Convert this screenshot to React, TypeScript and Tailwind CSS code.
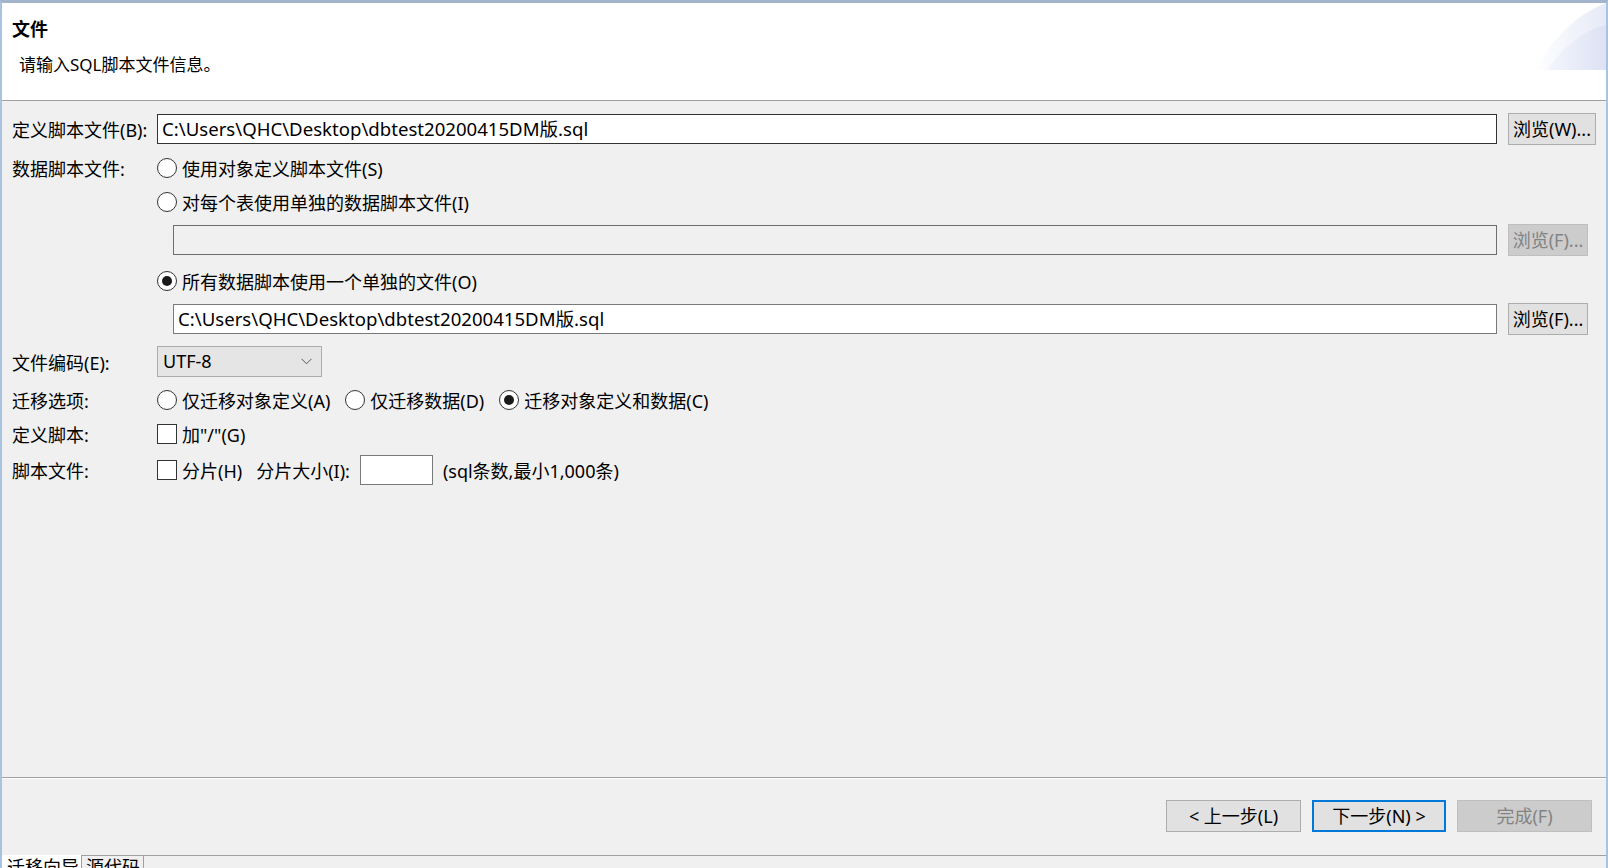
import React from "react"

const F = "font-['Noto_Sans','Noto_Sans_CJK_SC',sans-serif]"

function Radio({ checked }: { checked?: boolean }) {
  return (
    <span className="w-[20px] h-[20px] rounded-full border border-[#333333] bg-white flex items-center justify-center shrink-0">
      {checked && <span className="w-[10px] h-[10px] rounded-full bg-[#1a1a1a]" />}
    </span>
  )
}

function Check() {
  return <span className="w-[20px] h-[20px] border border-[#333333] bg-white shrink-0" />
}

function Btn({
  children,
  w,
  disabled,
  primary,
}: {
  children: React.ReactNode
  w: string
  disabled?: boolean
  primary?: boolean
}) {
  const base = "h-[32px] flex items-center justify-center text-[18px] leading-[24px] shrink-0"
  if (disabled)
    return <div className={`${base} ${w} bg-[#cccccc] border border-[#bfbfbf] text-[#838383]`}>{children}</div>
  if (primary)
    return <div className={`${base} ${w} bg-[#e1e1e1] border-2 border-[#0078d7] text-black`}>{children}</div>
  return <div className={`${base} ${w} bg-[#e1e1e1] border border-[#adadad] text-black`}>{children}</div>
}

function Label({ children }: { children: React.ReactNode }) {
  return <div className="w-[145px] shrink-0 text-[18px] leading-[24px] pt-[2px]">{children}</div>
}

function Opt({ checked, children }: { checked?: boolean; children: React.ReactNode }) {
  return (
    <div className="flex items-center gap-[5px]">
      <Radio checked={checked} />
      <span className="text-[18px] leading-[24px] pt-[2px]">{children}</span>
    </div>
  )
}

export default function App() {
  return (
    <div
      className={`${F} w-[1608px] h-[868px] overflow-hidden bg-[#f0f0f0] text-black flex flex-col border-t-[3px] border-t-[#a3b5cc] border-l-2 border-l-[#a8c2e0] border-r-2 border-r-[#a8c2e0]`}
    >
      {/* header */}
      <div className="relative h-[98px] shrink-0 bg-white border-b border-[#a0a0a0] pl-[10px]">
        <div className="mt-[14px] text-[18px] leading-[24px] font-bold">文件</div>
        <div className="mt-[12px] pl-[7px] text-[17px] leading-[24px]">请输入SQL脚本文件信息。</div>
        <svg className="absolute right-0 top-0" width="72" height="67" viewBox="0 0 72 67">
          <defs>
            <linearGradient id="g1" x1="0" y1="0" x2="1" y2="0">
              <stop offset="0" stopColor="#ffffff" />
              <stop offset="1" stopColor="#e6eaf7" />
            </linearGradient>
            <linearGradient id="g2" x1="0" y1="0" x2="1" y2="0">
              <stop offset="0" stopColor="#f4f6fc" />
              <stop offset="1" stopColor="#dce2f4" />
            </linearGradient>
          </defs>
          <path d="M0 67 C 18 38, 40 12, 72 0 L 72 67 Z" fill="url(#g1)" />
          <path d="M14 67 C 26 46, 48 28, 72 22 L 72 67 Z" fill="url(#g2)" />
        </svg>
      </div>

      {/* form */}
      <div className="flex-1 pl-[10px] pt-[11px] flex flex-col">
        <div className="h-[34px] flex items-center">
          <Label>定义脚本文件(B):</Label>
          <div className="w-[1340px] h-[30px] bg-white border border-[#333333] flex items-center pl-[4px] text-[18.6px]">
            C:\Users\QHC\Desktop\dbtest20200415DM版.sql
          </div>
          <div className="ml-[11px]">
            <Btn w="w-[88px]">浏览(W)...</Btn>
          </div>
        </div>

        <div className="mt-[5px] h-[34px] flex items-center">
          <Label>数据脚本文件:</Label>
          <Opt>使用对象定义脚本文件(S)</Opt>
        </div>

        <div className="h-[34px] flex items-center pl-[145px]">
          <Opt>对每个表使用单独的数据脚本文件(I)</Opt>
        </div>

        <div className="mt-[3px] h-[36px] flex items-center pl-[161px]">
          <div className="w-[1324px] h-[30px] bg-[#f0f0f0] border border-[#6e6e6e]" />
          <div className="ml-[11px]">
            <Btn w="w-[80px]" disabled>
              浏览(F)...
            </Btn>
          </div>
        </div>

        <div className="mt-[6px] h-[34px] flex items-center pl-[145px]">
          <Opt checked>所有数据脚本使用一个单独的文件(O)</Opt>
        </div>

        <div className="mt-[3px] h-[36px] flex items-center pl-[161px]">
          <div className="w-[1324px] h-[30px] bg-white border border-[#7a7a7a] flex items-center pl-[4px] text-[18.6px]">
            C:\Users\QHC\Desktop\dbtest20200415DM版.sql
          </div>
          <div className="ml-[11px]">
            <Btn w="w-[80px]">浏览(F)...</Btn>
          </div>
        </div>

        <div className="mt-[7px] h-[35px] flex items-center">
          <Label>文件编码(E):</Label>
          <div className="w-[165px] h-[31px] bg-[#e5e5e5] border border-[#acacac] flex items-center justify-between pl-[5px] pr-[9px] text-[18px]">
            <span>UTF-8</span>
            <svg width="11" height="7" viewBox="0 0 11 7">
              <path d="M0.5 0.8 L5.5 5.8 L10.5 0.8" fill="none" stroke="#555555" strokeWidth="1" />
            </svg>
          </div>
        </div>

        <div className="mt-[4px] h-[34px] flex items-center">
          <Label>迁移选项:</Label>
          <div className="flex items-center gap-[15px]">
            <Opt>仅迁移对象定义(A)</Opt>
            <Opt>仅迁移数据(D)</Opt>
            <Opt checked>迁移对象定义和数据(C)</Opt>
          </div>
        </div>

        <div className="h-[34px] flex items-center">
          <Label>定义脚本:</Label>
          <div className="flex items-center gap-[5px]">
            <Check />
            <span className="text-[18px] leading-[24px] pt-[2px]">加"/"(G)</span>
          </div>
        </div>

        <div className="mt-[2px] h-[34px] flex items-center">
          <Label>脚本文件:</Label>
          <div className="flex items-center gap-[5px]">
            <Check />
            <span className="text-[18px] leading-[24px] pt-[2px]">分片(H)</span>
          </div>
          <span className="ml-[14px] text-[18px] leading-[24px] pt-[2px]">分片大小(I):</span>
          <div className="ml-[10px] w-[73px] h-[30px] bg-white border border-[#7a7a7a]" />
          <span className="ml-[10px] text-[18px] leading-[24px] pt-[2px]">(sql条数,最小1,000条)</span>
        </div>
      </div>

      {/* buttons */}
      <div className="h-[78px] shrink-0 border-t border-[#a0a0a0]">
        <div className="h-px bg-white" />
        <div className="mt-[21px] flex justify-end gap-[11px] pr-[14px]">
          <Btn w="w-[135px]">&lt; 上一步(L)</Btn>
          <Btn w="w-[134px]" primary>
            下一步(N) &gt;
          </Btn>
          <Btn w="w-[135px]" disabled>
            完成(F)
          </Btn>
        </div>
      </div>

      {/* tabs */}
      <div className="h-[13px] shrink-0 flex border-t border-[#a0a0a0] relative">
        <div className="w-[79px] h-[14px] -mt-px bg-white pl-[5px] text-[18px] leading-[24px] overflow-hidden">迁移向导</div>
        <div className="w-[63px] border-l border-r border-[#a0a0a0] pl-[4px] text-[18px] leading-[24px] overflow-hidden -mt-px">
          源代码
        </div>
      </div>
    </div>
  )
}
